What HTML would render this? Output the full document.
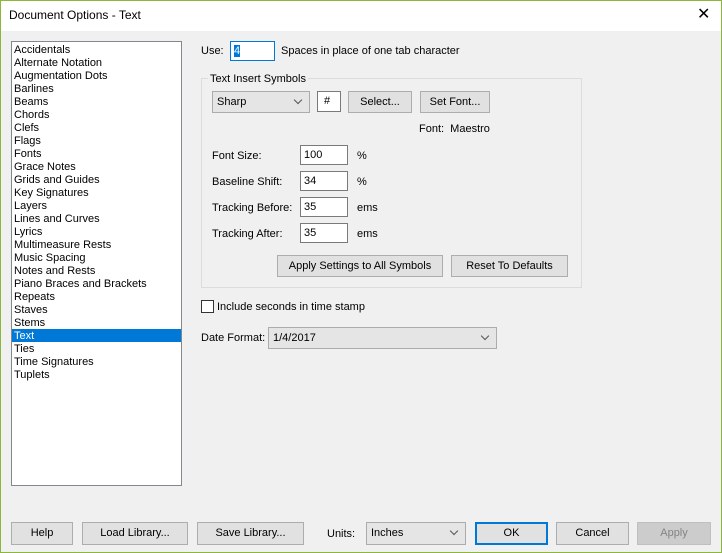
<html><head><style>
body{margin:0;width:722px;height:553px;overflow:hidden;font-family:"Liberation Sans",sans-serif;font-size:11px;color:#000;background:#f0f0f0;position:relative}
.frame{position:absolute;left:0;top:0;width:720px;height:551px;border:1px solid #8cb63c;z-index:5;pointer-events:none}
.tb{position:absolute;left:0;top:0;width:722px;height:31px;background:#fff}
.a{position:absolute;white-space:nowrap}
.btn{position:absolute;background:#e1e1e1;border:1px solid #adadad;box-sizing:border-box;text-align:center;line-height:21px}
.inp{position:absolute;background:#fff;border:1px solid #7a7a7a;box-sizing:border-box;padding-left:3px;line-height:19px}
.cb{position:absolute;background:#e5e5e5;border:1px solid #acacac;box-sizing:border-box;padding-left:4px;line-height:21px}
.cb:after{content:"";position:absolute;right:8px;top:5px;width:5px;height:5px;border-right:1px solid #555;border-bottom:1px solid #555;transform:rotate(45deg)}
.list{position:absolute;left:11px;top:41px;width:171px;height:445px;background:#fff;border:1px solid #828790;box-sizing:border-box}
.list div{height:13px;line-height:14px;padding-left:2px}
</style></head><body><div class="frame"></div>
<div class="tb"><span class="a" style="left:9px;top:8px;font-size:12px">Document Options - Text</span><span class="a" style="left:697px;top:4px;font-size:16px">✕</span></div>
<div class="list"><div style="height:1px"></div>
<div>Accidentals</div><div>Alternate Notation</div><div>Augmentation Dots</div><div>Barlines</div><div>Beams</div><div>Chords</div><div>Clefs</div><div>Flags</div><div>Fonts</div><div>Grace Notes</div><div>Grids and Guides</div><div>Key Signatures</div><div>Layers</div><div>Lines and Curves</div><div>Lyrics</div><div>Multimeasure Rests</div><div>Music Spacing</div><div>Notes and Rests</div><div>Piano Braces and Brackets</div><div>Repeats</div><div>Staves</div><div>Stems</div><div style="background:#0078d7;color:#fff">Text</div><div>Ties</div><div>Time Signatures</div><div>Tuplets</div></div>
<span class="a" style="left:201px;top:45px">Use:</span>
<div class="inp" style="left:230px;top:41px;width:45px;height:20px;border:1px solid #0078d7"><span style="background:#0078d7;color:#fff">4</span></div>
<span class="a" style="left:281px;top:45px">Spaces in place of one tab character</span>
<div style="position:absolute;left:201px;top:78px;width:379px;height:208px;border:1px solid #dcdcdc"></div>
<span class="a" style="left:208px;top:73px;background:#f0f0f0;padding:0 2px">Text Insert Symbols</span>
<div class="cb" style="left:212px;top:91px;width:98px;height:22px">Sharp</div>
<div class="inp" style="left:317px;top:91px;width:24px;height:21px;padding-left:6px">#</div>
<div class="btn" style="left:348px;top:91px;width:64px;height:22px">Select...</div>
<div class="btn" style="left:420px;top:91px;width:70px;height:22px">Set Font...</div>
<span class="a" style="left:419px;top:123px">Font:&nbsp; Maestro</span>
<span class="a" style="left:212px;top:150px">Font Size:</span><div class="inp" style="left:300px;top:145px;width:48px;height:20px">100</div><span class="a" style="left:357px;top:150px">%</span>
<span class="a" style="left:212px;top:176px">Baseline Shift:</span><div class="inp" style="left:300px;top:171px;width:48px;height:20px">34</div><span class="a" style="left:357px;top:176px">%</span>
<span class="a" style="left:212px;top:202px">Tracking Before:</span><div class="inp" style="left:300px;top:197px;width:48px;height:20px">35</div><span class="a" style="left:357px;top:202px">ems</span>
<span class="a" style="left:212px;top:228px">Tracking After:</span><div class="inp" style="left:300px;top:223px;width:48px;height:20px">35</div><span class="a" style="left:357px;top:228px">ems</span>
<div class="btn" style="left:277px;top:255px;width:166px;height:22px">Apply Settings to All Symbols</div>
<div class="btn" style="left:451px;top:255px;width:117px;height:22px">Reset To Defaults</div>
<div style="position:absolute;left:201px;top:300px;width:13px;height:13px;border:1px solid #333;box-sizing:border-box;background:#fff"></div>
<span class="a" style="left:217px;top:301px">Include seconds in time stamp</span>
<span class="a" style="left:201px;top:332px">Date Format:</span>
<div class="cb" style="left:268px;top:327px;width:229px;height:22px">1/4/2017</div>
<div class="btn" style="left:11px;top:522px;width:62px;height:23px">Help</div>
<div class="btn" style="left:82px;top:522px;width:106px;height:23px">Load Library...</div>
<div class="btn" style="left:197px;top:522px;width:107px;height:23px">Save Library...</div>
<span class="a" style="left:327px;top:528px">Units:</span>
<div class="cb" style="left:366px;top:522px;width:100px;height:23px">Inches</div>
<div class="btn" style="left:475px;top:522px;width:73px;height:23px;border:2px solid #0078d7;line-height:19px">OK</div>
<div class="btn" style="left:556px;top:522px;width:73px;height:23px">Cancel</div>
<div class="btn" style="left:637px;top:522px;width:74px;height:23px;background:#ccc;border-color:#bfbfbf;color:#838383">Apply</div>
</body></html>
